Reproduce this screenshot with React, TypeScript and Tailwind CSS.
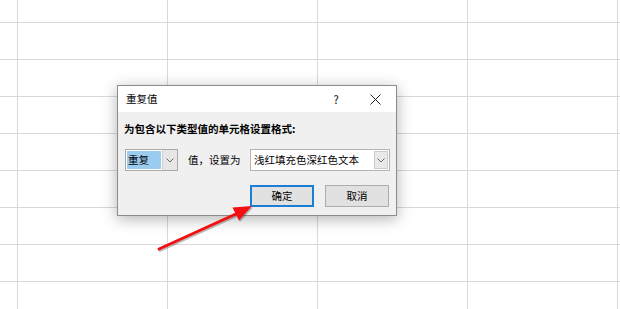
import React from 'react'

const font = { fontFamily: '"Noto Sans CJK SC", "Noto Sans", sans-serif' }

function Chevron() {
  return (
    <svg width="8" height="5" viewBox="0 0 8 5" fill="none">
      <path d="M0.5 0.5 L4 4 L7.5 0.5" stroke="#6b6b6b" strokeWidth="1" />
    </svg>
  )
}

function SheetGrid() {
  const cells = Array.from({ length: 54 }, (_, i) => i)
  return (
    <div className="grid h-full w-full grid-cols-[18px_repeat(4,150px)_1fr] grid-rows-[23px_repeat(7,37px)_1fr]">
      {cells.map((i) => {
        const lastCol = i % 6 === 5
        const lastRow = i >= 48
        return (
          <div
            key={i}
            className={
              (lastCol ? '' : 'border-r ') +
              (lastRow ? '' : 'border-b ') +
              'border-[#d8d8d8] bg-white'
            }
          />
        )
      })}
    </div>
  )
}

function Dialog() {
  return (
    <div
      className="absolute left-[117px] top-[85px] flex h-[131px] w-[280px] flex-col border border-[#8c8c8c] bg-[#f0f0f0] text-[10.5px] text-black shadow-[0_3px_14px_rgba(0,0,0,0.3)]"
      style={font}
    >
      <div className="flex h-[26px] items-center bg-white pl-[8px]">
        <span className="leading-none">重复值</span>
        <div className="ml-auto flex h-full items-center">
          <span className="w-[36px] text-center text-[11px] leading-none">?</span>
          <div className="flex w-[42px] items-center justify-center">
            <svg width="11" height="11" viewBox="0 0 11 11">
              <path d="M0.5 0.5 L10.5 10.5 M10.5 0.5 L0.5 10.5" stroke="#222" strokeWidth="1" />
            </svg>
          </div>
        </div>
      </div>

      <div className="flex flex-col px-[6px] pt-[10px]">
        <div className="font-bold leading-[14px]">为包含以下类型值的单元格设置格式:</div>

        <div className="mt-[13px] flex h-[22px] items-center">
          <div className="ml-[1px] flex h-full w-[53px] border border-[#a9a9a9] bg-white">
            <div className="m-[1px] flex flex-1 items-center bg-[#9ccbf0] pl-[1px] leading-none">重复</div>
            <div className="flex w-[15px] items-center justify-center border-l border-[#cfcfcf] bg-[#e6e6e6]">
              <Chevron />
            </div>
          </div>
          <span className="ml-[10px] leading-none">值，设置为</span>
          <div className="ml-auto flex h-full w-[140px] border border-[#b4b4b4] bg-white">
            <div className="flex flex-1 items-center pl-[3px] leading-none">浅红填充色深红色文本</div>
            <div className="m-[1px] flex w-[14px] items-center justify-center border border-[#cdcdcd] bg-[#e9e9e9]">
              <Chevron />
            </div>
          </div>
        </div>

        <div className="mr-[1px] mt-[14px] flex justify-end gap-[11px]">
          <button className="flex h-[22px] w-[64px] items-center justify-center border-2 border-[#1a7fd4] bg-[#e1e1e1] leading-none">
            确定
          </button>
          <button className="flex h-[22px] w-[64px] items-center justify-center border border-[#adadad] bg-[#e1e1e1] leading-none">
            取消
          </button>
        </div>
      </div>
    </div>
  )
}

function Arrow() {
  return (
    <svg className="pointer-events-none absolute left-0 top-0" width="620" height="309" viewBox="0 0 620 309">
      <g opacity="0.25" transform="translate(1 1.5)">
        <line x1="159" y1="249" x2="238" y2="213" stroke="#000" strokeWidth="3" strokeLinecap="round" />
        <polygon points="252,206 232.5,207.5 239,220.5" fill="#000" />
      </g>
      <line x1="159" y1="249" x2="238" y2="213" stroke="#f41010" strokeWidth="3" strokeLinecap="round" />
      <polygon points="252,206 232.5,207.5 239,220.5" fill="#f41010" />
    </svg>
  )
}

export default function App() {
  return (
    <div className="relative h-[309px] w-[620px] overflow-hidden bg-white">
      <SheetGrid />
      <Dialog />
      <Arrow />
    </div>
  )
}
